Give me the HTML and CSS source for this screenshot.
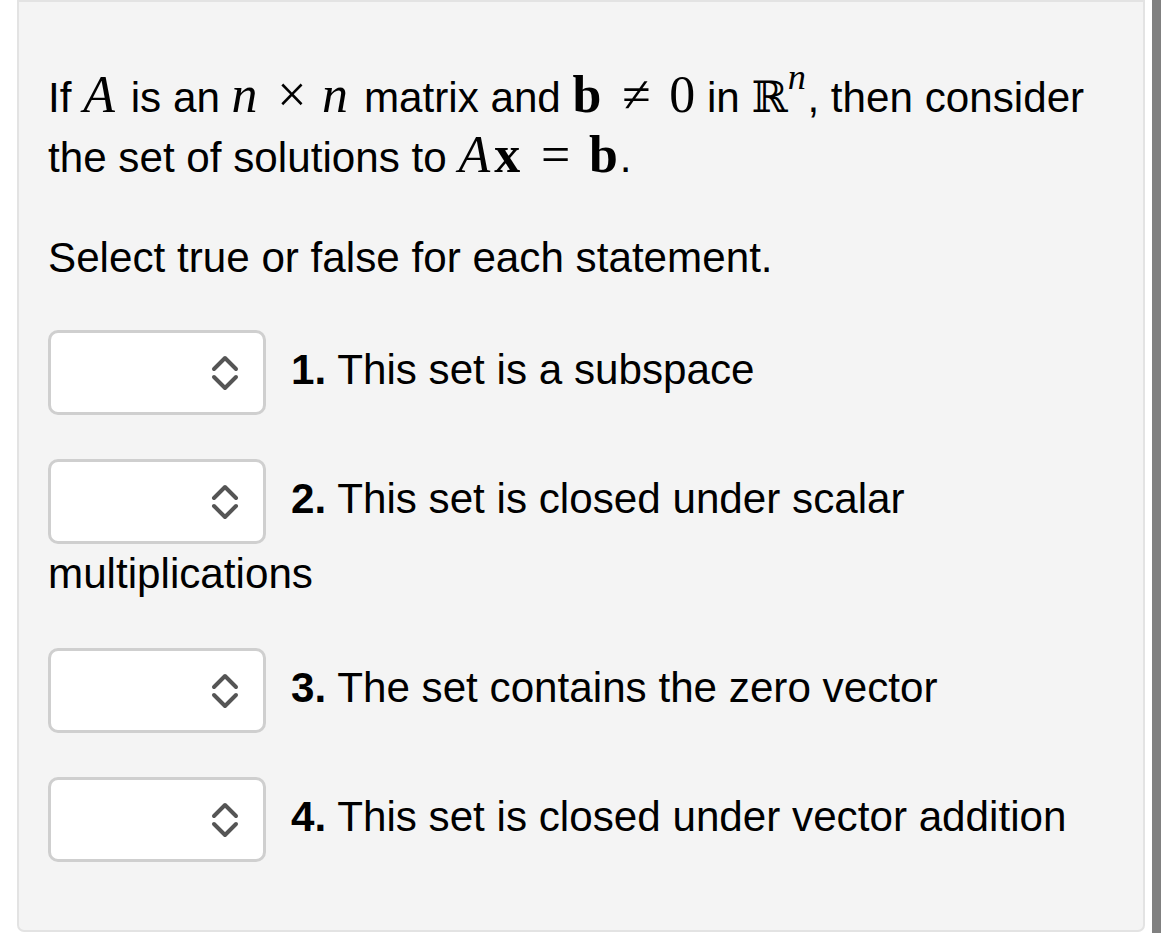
FILE: index.html
```html
<!DOCTYPE html>
<html>
<head>
<meta charset="utf-8">
<link rel="stylesheet" href="styles.css">
</head>
<body>
<div class="page">
  <div class="card">
    <p class="para">If <span class="m"><i>A</i></span> is an <span class="m"><i>n</i><span class="bin">×</span><i>n</i></span> matrix and <span class="m"><b>b</b><span class="rel">≠</span>0</span> in <span class="m"><span class="bb">ℝ</span><sup><i>n</i></sup></span>, then consider the set of solutions to <span class="m"><i>A</i><b>x</b><span class="rel">=</span><b>b</b></span>.</p>
    <p class="para">Select true or false for each statement.</p>
    <p class="para item first"><span class="select"><svg class="chev" viewBox="0 0 32 38" width="32" height="38"><path d="M5 15 L16 4 L27 15 M5 23 L16 34 L27 23" fill="none" stroke="#555" stroke-width="4" stroke-linecap="round" stroke-linejoin="round"/></svg></span><b>1.</b> This set is a subspace</p>
    <p class="para item"><span class="select"><svg class="chev" viewBox="0 0 32 38" width="32" height="38"><path d="M5 15 L16 4 L27 15 M5 23 L16 34 L27 23" fill="none" stroke="#555" stroke-width="4" stroke-linecap="round" stroke-linejoin="round"/></svg></span><b>2.</b> This set is closed under scalar multiplications</p>
    <p class="para item"><span class="select"><svg class="chev" viewBox="0 0 32 38" width="32" height="38"><path d="M5 15 L16 4 L27 15 M5 23 L16 34 L27 23" fill="none" stroke="#555" stroke-width="4" stroke-linecap="round" stroke-linejoin="round"/></svg></span><b>3.</b> The set contains the zero vector</p>
    <p class="para item"><span class="select"><svg class="chev" viewBox="0 0 32 38" width="32" height="38"><path d="M5 15 L16 4 L27 15 M5 23 L16 34 L27 23" fill="none" stroke="#555" stroke-width="4" stroke-linecap="round" stroke-linejoin="round"/></svg></span><b>4.</b> This set is closed under vector addition</p>
  </div>
  <div class="bar"></div>
</div>
</body>
</html>
```
FILE: styles.css
```css
html, body {
  margin: 0;
  padding: 0;
  background: #fff;
}
.page {
  display: flex;
  align-items: flex-start;
  height: 933px;
  overflow: hidden;
}
.card {
  margin-left: 17px;
  width: 1128px;
  box-sizing: border-box;
  background: #f4f4f4;
  border: 2px solid #e3e3e3;
  border-radius: 0 0 7px 7px;
  padding: 66px 30px 68px 29px;
  font-family: "Liberation Sans", Arial, sans-serif;
  font-size: 42.2px;
  line-height: 60px;
  color: #000;
}
.bar {
  margin-left: 7px;
  width: 9px;
  height: 933px;
  background: #808080;
}
.para {
  margin: 0;
}
.para + .para {
  margin-top: 40px;
}
.para.item {
  margin-top: 44px;
}
.para.item.first {
  margin-top: 42px;
}
.m {
  font-family: "Liberation Serif", "DejaVu Serif", serif;
  font-size: 1.23em;
  line-height: 1;
}
.m i {
  font-style: italic;
  padding-right: 0.08em;
}
.m b {
  font-weight: bold;
  padding-right: 0.04em;
}
.bin {
  padding: 0 0.3em;
}
.rel {
  padding: 0 0.36em;
}
.bb {
  font-family: "DejaVu Serif", serif;
  font-size: 0.84em;
}
.m sup {
  font-size: 0.7em;
  line-height: 0;
  vertical-align: 0.62em;
}
.m sup i {
  padding-right: 0.04em;
}
.item b {
  font-weight: bold;
}
.select {
  display: inline-flex;
  align-items: center;
  justify-content: flex-end;
  box-sizing: border-box;
  width: 218px;
  height: 85px;
  border: 3px solid #cfcfcf;
  border-radius: 10px;
  background: #fff;
  padding-right: 22px;
  margin-right: 25px;
  vertical-align: middle;
}
.chev {
  display: block;
}
```
